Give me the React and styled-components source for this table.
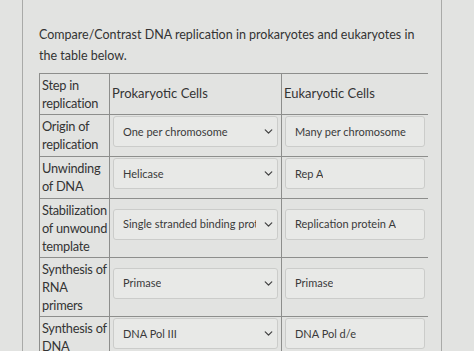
import React from 'react'
import styled, { createGlobalStyle } from 'styled-components';
import { ChevronDown } from 'lucide-react';

const GlobalStyle = createGlobalStyle`
  html, body {
    margin: 0;
    background: #e2e3e1;
  }
  body {
    font-family: Lato, "Open Sans", sans-serif;
    color: #343434;
  }
`;

const Page = styled.div`
  padding-left: 22px;
  height: 351px;
  overflow: hidden;
`;

const Panel = styled.div`
  width: 402px;
  min-height: 351px;
  padding: 24px 0 0 16px;
  border-left: 1px solid #a9aaa8;
  border-right: 1px solid #a9aaa8;
`;

const Prompt = styled.p`
  margin: 0 0 7px;
  font-size: 12.5px;
  line-height: 21px;
  color: #333;
`;

const Table = styled.div`
  display: grid;
  grid-template-columns: 70px 172px 146px;
  width: 388px;
  border-top: 1px solid #8d8e8c;
  border-left: 1px solid #8d8e8c;
`;

const Cell = styled.div`
  display: flex;
  align-items: center;
  padding: 1px 3px 9px;
  border-bottom: 1px solid #8d8e8c;
  border-right: ${p => (p.$last ? 'none' : '1px solid #8d8e8c')};
  font-size: 13px;
  line-height: 18px;
`;

const StepCell = styled(Cell)`
  align-items: flex-start;
  padding: 2px 0 2px 2px;
  font-size: 12.8px;
  letter-spacing: -0.25px;
`;

const HeadCell = styled(Cell)`
  padding: 2px 2px 4px;
`;

const Field = styled.div`
  flex: 1;
  display: flex;
  align-items: center;
  justify-content: space-between;
  height: 29px;
  padding: 0 2px 0 9px;
  border: 1px solid #cbccca;
  border-radius: 3px;
  background: #e8e9e7;
  font-size: 11px;
  color: #3a3a3a;
  white-space: nowrap;
  overflow: hidden;

  & > span {
    overflow: hidden;
  }
  & svg {
    flex: none;
    margin-left: 6px;
  }
`;

const rows = [
  { step: 'Origin of replication', pro: 'One per chromosome', eu: 'Many per chromosome' },
  { step: 'Unwinding of DNA', pro: 'Helicase', eu: 'Rep A' },
  { step: 'Stabilization of unwound template', pro: 'Single stranded binding protein', eu: 'Replication protein A' },
  { step: 'Synthesis of RNA primers', pro: 'Primase', eu: 'Primase' },
  { step: 'Synthesis of DNA', pro: 'DNA Pol III', eu: 'DNA Pol d/e' },
];

const App = () => {
  return (
    <Page>
      <GlobalStyle />
      <Panel>
        <Prompt>
          Compare/Contrast DNA replication in prokaryotes and eukaryotes in
          <br />
          the table below.
        </Prompt>
        <Table>
          <StepCell>Step in replication</StepCell>
          <HeadCell>Prokaryotic Cells</HeadCell>
          <HeadCell $last>Eukaryotic Cells</HeadCell>
          {rows.map(row => (
            <React.Fragment key={row.step}>
              <StepCell>{row.step}</StepCell>
              <Cell>
                <Field>
                  <span>{row.pro}</span>
                  <ChevronDown size={13} strokeWidth={2.4} color="#444" />
                </Field>
              </Cell>
              <Cell $last>
                <Field>
                  <span>{row.eu}</span>
                </Field>
              </Cell>
            </React.Fragment>
          ))}
        </Table>
      </Panel>
    </Page>
  )
}

export default App
